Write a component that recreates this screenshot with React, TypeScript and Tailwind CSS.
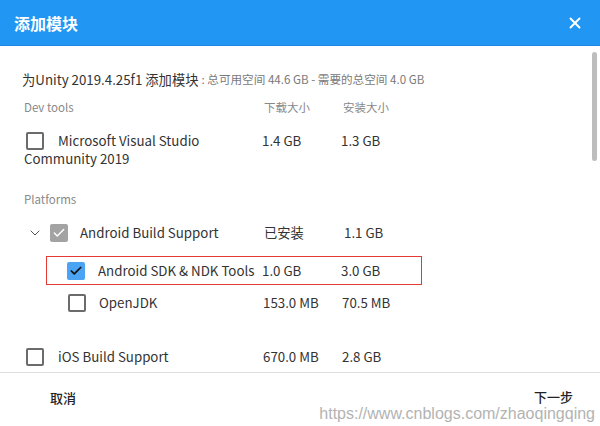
import { ChevronDown, X, Check } from "lucide-react";

type Size = { dl: string; inst: string };

function Box({ state }: { state: "off" | "on" | "locked" }) {
  if (state === "on") {
    return (
      <span className="inline-flex w-[18px] h-[18px] rounded-[2px] bg-[#4aa3f3] items-center justify-center shrink-0">
        <Check size={14} strokeWidth={3} className="text-[#111]" />
      </span>
    );
  }
  if (state === "locked") {
    return (
      <span className="inline-flex w-[18px] h-[18px] rounded-[2px] bg-[#a3a3a3] items-center justify-center shrink-0">
        <Check size={14} strokeWidth={2.5} className="text-white" />
      </span>
    );
  }
  return <span className="inline-block w-[18px] h-[18px] rounded-[2px] border-2 border-[#6b6b6b] bg-white shrink-0" />;
}

function Sizes({ s }: { s: Size }) {
  return (
    <>
      <span>{s.dl}</span>
      <span>{s.inst}</span>
    </>
  );
}

export default function App() {
  return (
    <div
      className="relative w-[600px] h-[426px] overflow-hidden bg-white text-[#333] text-[13.3px]"
      style={{ fontFamily: '"Noto Sans CJK SC", "Noto Sans", sans-serif' }}
    >
      <header className="h-[46px] bg-[#2196f3] flex items-center justify-between pl-[14px] pr-[16px] border-b border-[#1e88e5]">
        <h1 className="text-white text-[16px] font-bold">添加模块</h1>
        <X size={18} strokeWidth={2.5} className="text-white" />
      </header>

      <div className="absolute right-[3px] top-[52px] w-[5px] h-[109px] rounded-full bg-[#bdbdbd]" />

      <main className="pl-[22px] pt-[22px]">
        <div className="h-[24px] flex items-center whitespace-nowrap">
          <span className="text-[13.3px] text-[#333]">为Unity 2019.4.25f1 添加模块</span>
          <span className="text-[11.6px] text-[#7a7a7a] ml-[3px]">: 总可用空间 44.6 GB - 需要的总空间 4.0 GB</span>
        </div>

        <div className="h-[32px] grid grid-cols-[242px_79px_1fr] items-center text-[11.5px] text-[#888] pl-[2px]">
          <span>Dev tools</span>
          <span className="-ml-[2px]">下载大小</span>
          <span className="-ml-[2px]">安装大小</span>
        </div>

        <div className="grid grid-cols-[242px_79px_1fr] pt-[8px] leading-[18px]">
          <div className="pr-[20px] pl-[2px]">
            <span className="inline-flex align-top ml-[2px] mr-[14px]">
              <Box state="off" />
            </span>
            Microsoft Visual Studio Community 2019
          </div>
          <span className="-ml-[2px] self-start leading-[18px]">1.4 GB</span>
          <span className="-ml-[2px] self-start leading-[18px]">1.3 GB</span>
        </div>

        <div className="mt-[22px] h-[20px] flex items-center text-[11.5px] text-[#888] pl-[2px]">Platforms</div>

        <div className="mt-[8px] h-[30px] grid grid-cols-[242px_79px_1fr] items-center">
          <div className="flex items-center">
            <ChevronDown size={16} strokeWidth={1.5} className="text-[#555] ml-[5px]" />
            <span className="ml-[7px] flex"><Box state="locked" /></span>
            <span className="ml-[12px]">Android Build Support</span>
          </div>
          <span>已安装</span>
          <span className="pl-[1px]">1.1 GB</span>
        </div>

        <div className="mt-[8px] ml-[24px] w-[376px] h-[29px] border-[1.5px] border-[#e53935] grid grid-cols-[215px_79px_1fr] items-center">
          <div className="flex items-center pl-[20px] whitespace-nowrap">
            <Box state="on" />
            <span className="ml-[13px]">Android SDK &amp; NDK Tools</span>
          </div>
          <Sizes s={{ dl: "1.0 GB", inst: "3.0 GB" }} />
        </div>

        <div className="mt-[3px] h-[30px] grid grid-cols-[241px_79px_1fr] items-center">
          <div className="flex items-center pl-[46px]">
            <Box state="off" />
            <span className="ml-[13px]">OpenJDK</span>
          </div>
          <Sizes s={{ dl: "153.0 MB", inst: "70.5 MB" }} />
        </div>

        <div className="mt-[24px] h-[30px] grid grid-cols-[241px_79px_1fr] items-center">
          <div className="flex items-center pl-[4px]">
            <Box state="off" />
            <span className="ml-[14px]">iOS Build Support</span>
          </div>
          <Sizes s={{ dl: "670.0 MB", inst: "2.8 GB" }} />
        </div>
      </main>

      <footer className="border-t border-[#dedede] h-[54px] flex items-center justify-between pl-[50px] pr-[27px] text-[13px] text-[#222] font-medium">
        <span className="mt-[-3px]">取消</span>
        <span className="mt-[-6px]">下一步</span>
      </footer>

      <span
        className="absolute right-[5px] bottom-[4px] text-[16px] text-[#b3b3b3] leading-none"
        style={{ fontFamily: '"Liberation Sans", sans-serif' }}
      >
        https://www.cnblogs.com/zhaoqingqing
      </span>
    </div>
  );
}
